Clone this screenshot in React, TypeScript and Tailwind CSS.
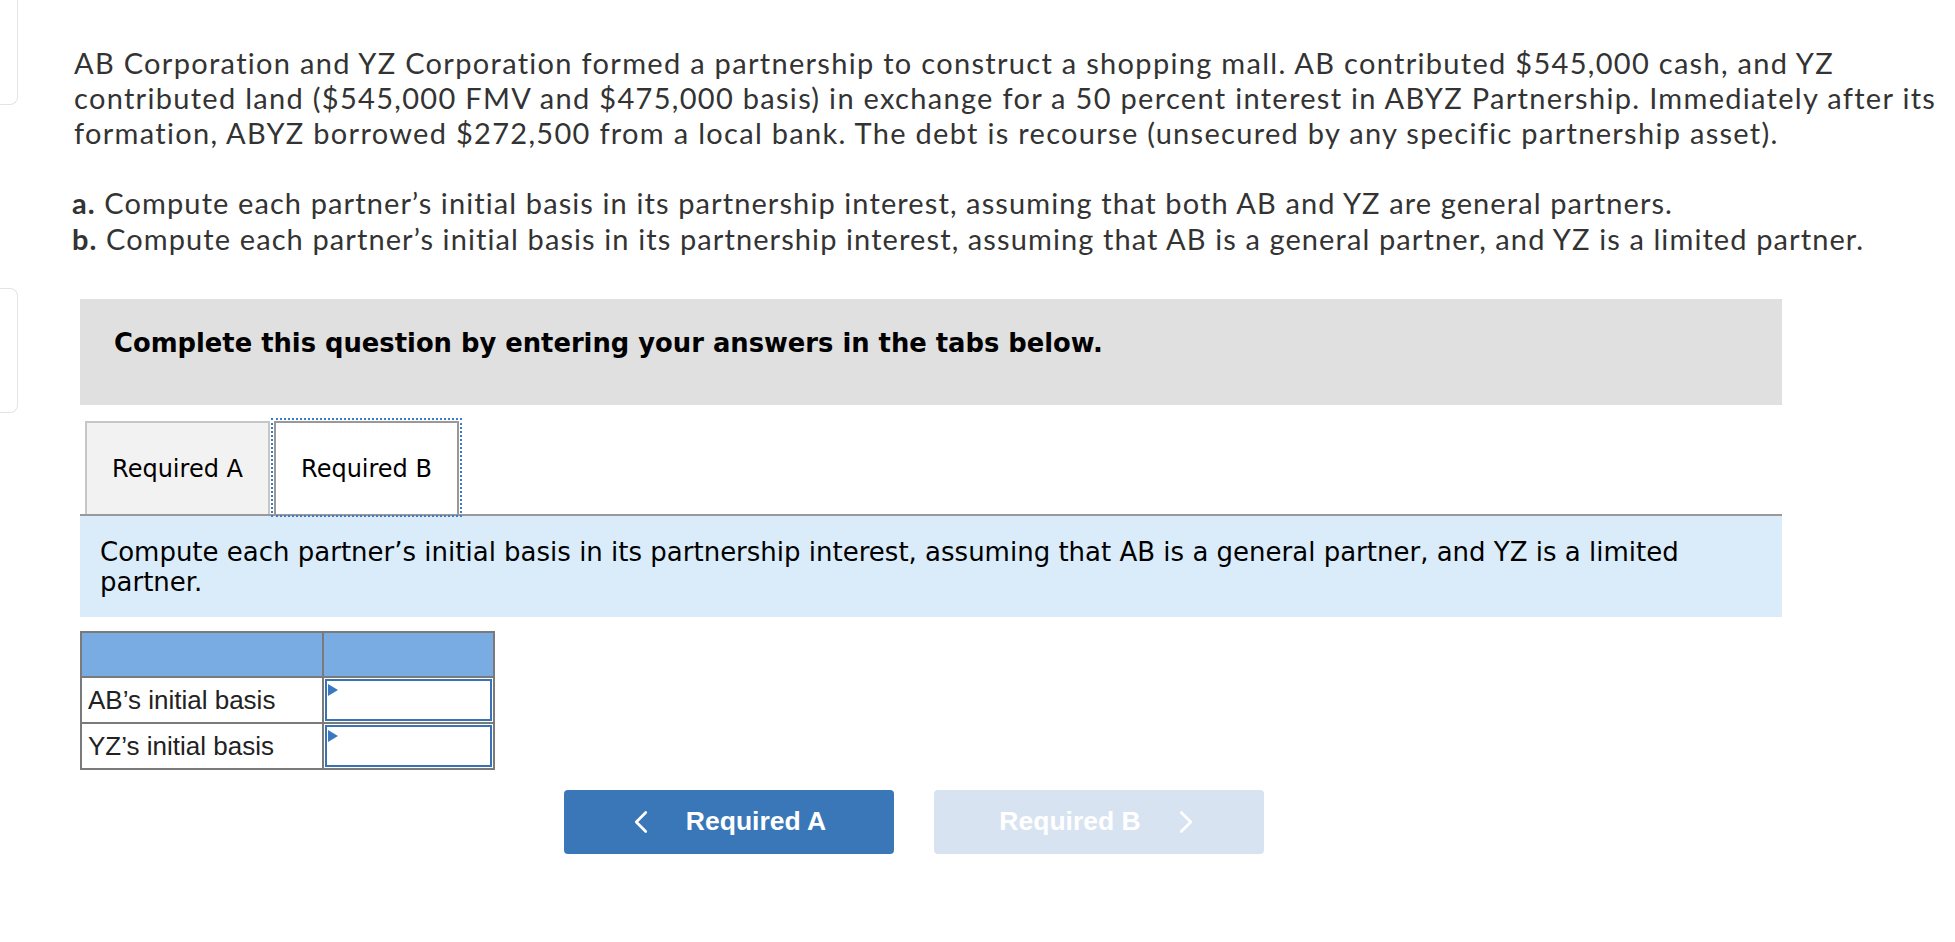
import { ChevronLeft, ChevronRight } from "lucide-react";

const para = [
  "AB Corporation and YZ Corporation formed a partnership to construct a shopping mall. AB contributed $545,000 cash, and YZ",
  "contributed land ($545,000 FMV and $475,000 basis) in exchange for a 50 percent interest in ABYZ Partnership. Immediately after its",
  "formation, ABYZ borrowed $272,500 from a local bank. The debt is recourse (unsecured by any specific partnership asset).",
];

function AnswerCell() {
  return (
    <td className="border-2 border-[#7a7a7a] p-0 bg-white">
      <div className="relative m-[1px] h-[42px] border-2 border-[#3a73b5] bg-white">
        <span className="absolute left-[1px] top-[3px] h-0 w-0 border-y-[6px] border-l-[10px] border-y-transparent border-l-[#3a78c0]" />
      </div>
    </td>
  );
}

export default function App() {
  return (
    <div className="flex min-h-[942px] w-[1955px] bg-white text-[#333]">
      {/* partly hidden side rail */}
      <div className="flex w-[18px] shrink-0 flex-col">
        <div className="h-[105px] rounded-br-lg border-r border-b border-[#e4e4e4]" />
        <div className="mt-[183px] h-[125px] rounded-r-lg border border-l-0 border-[#e4e4e4]" />
      </div>

      <main className="ml-[54px] w-[1710px] pt-[45px]">
        <div className="font-['Lato',sans-serif] text-[29px] leading-[35px] tracking-[1.3px]">
          {para.map((l) => (
            <div key={l} className="whitespace-nowrap pl-[2px]">{l}</div>
          ))}
        </div>

        <div className="mt-[35px] font-['Lato',sans-serif] text-[29px] leading-[36px] tracking-[1.1px]">
          <div className="whitespace-nowrap">
            <b>a.</b> Compute each partner’s initial basis in its partnership interest, assuming that both AB and YZ are general partners.
          </div>
          <div className="whitespace-nowrap">
            <b>b.</b> Compute each partner’s initial basis in its partnership interest, assuming that AB is a general partner, and YZ is a limited partner.
          </div>
        </div>

        <section className="ml-[8px] font-['DejaVu_Sans',Verdana,sans-serif]">
          <div className="mt-[42px] h-[106px] bg-[#e0e0e0] pl-[34px] pt-[30px]">
            <p className="text-[25.8px] font-bold leading-[28px] text-black">
              Complete this question by entering your answers in the tabs below.
            </p>
          </div>

          <div className="mt-[16px] flex items-end border-b-2 border-[#999]">
            <button className="ml-[5px] flex h-[93px] w-[185px] items-center justify-center border-2 border-b-0 border-[#c6c6c6] bg-[#f2f2f2] text-[24px] text-black">
              Required A
            </button>
            <button className="ml-[4px] flex h-[93px] w-[185px] items-center justify-center border-2 border-b-0 border-[#999] bg-white text-[24px] text-black outline-2 outline-offset-[1px] outline-dotted outline-[#3d7cc9]">
              Required B
            </button>
          </div>

          <div className="h-[101px] bg-[#daecf9] pl-[20px] pt-[21px] text-[26px] leading-[30px] text-black">
            Compute each partner’s initial basis in its partnership interest, assuming that AB is a general partner, and YZ is a limited
            <br />
            partner.
          </div>

          <table className="mt-[14px] w-[415px] border-collapse border-2 border-[#7a7a7a] font-['Liberation_Sans',Arial,sans-serif]">
            <tbody>
              <tr className="h-[45px] bg-[#79ace3]">
                <th className="w-[242px] border-2 border-[#7a7a7a]" />
                <th className="border-2 border-[#7a7a7a]" />
              </tr>
              <tr className="h-[45px]">
                <td className="border-2 border-[#7a7a7a] pl-[6px] text-[26px] leading-[30px] text-[#222]">AB’s initial basis</td>
                <AnswerCell />
              </tr>
              <tr className="h-[45px]">
                <td className="border-2 border-[#7a7a7a] pl-[6px] text-[26px] leading-[30px] text-[#222]">YZ’s initial basis</td>
                <AnswerCell />
              </tr>
            </tbody>
          </table>

          <div className="mt-[20px] flex gap-[40px] pl-[484px] font-['Liberation_Sans',Arial,sans-serif]">
            <button className="flex h-[64px] w-[330px] items-center justify-center gap-[26px] rounded-[4px] bg-[#3a77b9] pr-[10px] text-[26.5px] font-bold text-white">
              <ChevronLeft size={38} strokeWidth={1.7} />
              <span>Required A</span>
            </button>
            <button className="flex h-[64px] w-[330px] items-center justify-center gap-[26px] rounded-[4px] bg-[#d8e3f1] pl-[6px] text-[26.5px] font-bold text-white">
              <span>Required B</span>
              <ChevronRight size={38} strokeWidth={1.7} />
            </button>
          </div>
        </section>
      </main>
    </div>
  );
}
